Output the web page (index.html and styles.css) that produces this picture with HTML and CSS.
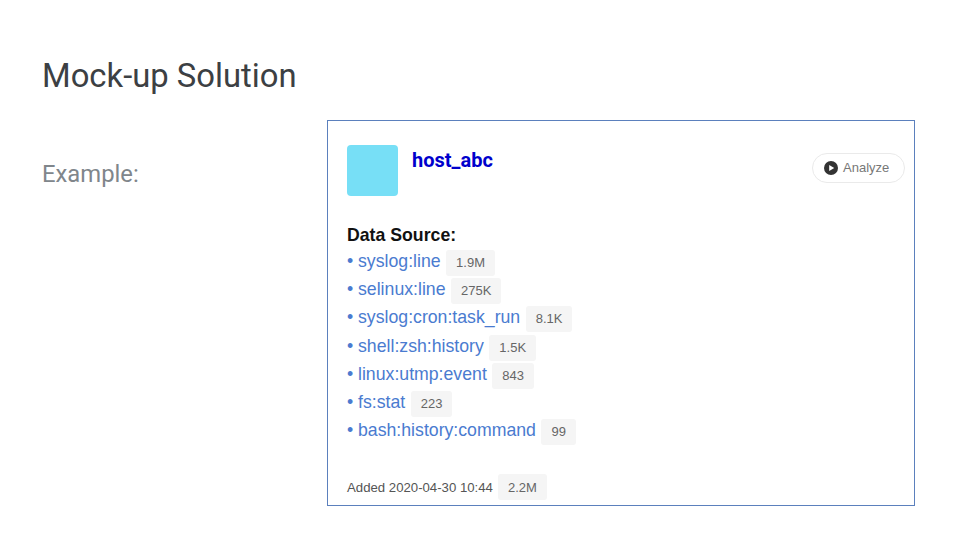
FILE: index.html
```html
<!DOCTYPE html>
<html lang="en">
<head>
<meta charset="utf-8">
<title>Mock-up Solution</title>
<link rel="stylesheet" href="styles.css">
</head>
<body>
<main class="slide">
  <h1 class="title">Mock-up Solution</h1>
  <div class="content">
    <p class="label">Example:</p>
    <section class="card">
      <header class="card-head">
        <div class="avatar"></div>
        <a class="host">host_abc</a>
        <button class="analyze">
          <svg class="play" viewBox="0 0 14 14" width="14" height="14" aria-hidden="true"><circle cx="7" cy="7" r="7" fill="#333"/><path d="M5.2 3.9 10.2 7 5.2 10.1Z" fill="#fff"/></svg>
          <span>Analyze</span>
        </button>
      </header>
      <h2 class="src-title">Data Source:</h2>
      <ul class="src-list">
        <li><a>syslog:line</a><span class="badge">1.9M</span></li>
        <li><a>selinux:line</a><span class="badge">275K</span></li>
        <li><a>syslog:cron:task_run</a><span class="badge">8.1K</span></li>
        <li><a>shell:zsh:history</a><span class="badge">1.5K</span></li>
        <li><a>linux:utmp:event</a><span class="badge">843</span></li>
        <li><a>fs:stat</a><span class="badge">223</span></li>
        <li><a>bash:history:command</a><span class="badge">99</span></li>
      </ul>
      <footer class="card-foot"><span>Added 2020-04-30 10:44</span><span class="badge">2.2M</span></footer>
    </section>
  </div>
</main>
</body>
</html>
```
FILE: styles.css
```css
* { box-sizing: border-box; }
html, body { margin: 0; padding: 0; background: #fff; }
.slide { width: 960px; height: 540px; padding: 57px 45px 0 42px; overflow: hidden; font-family: "Liberation Sans", Arial, sans-serif; }
.title { margin: 0; height: 63px; font: 400 32.8px/39px Roboto, sans-serif; color: #3c4043; }
.content { display: flex; align-items: flex-start; }
.label { margin: 39px 0 0; width: 285px; font: 400 23.8px/30px Roboto, sans-serif; color: #80868b; }
.card { width: 588px; height: 386px; border: 1px solid #5b80bd; padding: 24px 9px 0 19px; display: flex; flex-direction: column; }
.card-head { display: flex; align-items: flex-start; height: 51px; }
.avatar { width: 51px; height: 51px; border-radius: 4px; background: #77dff6; }
.host { margin: 4px 0 0 14px; font: 700 20px/23px Roboto, sans-serif; color: #0000cc; }
.analyze { margin: 8px 0 0 auto; width: 93px; height: 30px; padding: 0 0 0 11px; display: flex; align-items: center; gap: 5px; background: #fff; border: 1px solid #eaeaea; border-radius: 15px; font: 400 13px/16px "Liberation Sans", sans-serif; color: #777; }
.play { flex: none; }
.src-title { margin: 28px 0 0; font: 700 17.7px/22px "Liberation Sans", sans-serif; color: #111; }
.src-list { list-style: none; margin: 3px 0 0; padding: 0; }
.src-list li { height: 28.2px; display: flex; align-items: center; font-size: 17.7px; line-height: 22px; color: #4a7bd0; }
.src-list li::before { content: "•"; width: 11px; position: relative; top: -2px; }
.src-list a { position: relative; top: -2px; }
.badge { margin-left: 5.5px; padding: 0 10px; height: 26px; display: inline-flex; align-items: center; background: #f5f5f5; border-radius: 3px; font-size: 13px; color: #666; }
.card-foot { margin-top: 28px; display: flex; align-items: center; font-size: 13.2px; color: #555; }
.card-foot .badge { margin-left: 5px; font-size: 13px; }
```
